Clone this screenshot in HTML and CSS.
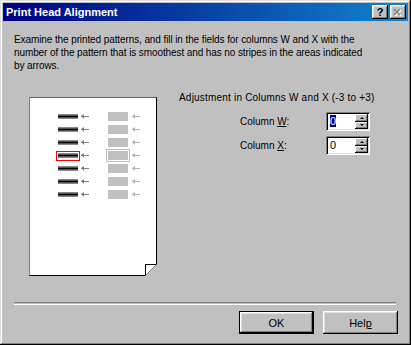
FILE: index.html
```html
<!DOCTYPE html>
<html lang="en">
<head>
    <meta charset="UTF-8">
    <title>Print Head Alignment</title>
    <link rel="stylesheet" href="styles.css">
</head>
<body>
    <div class="window">
        <div class="titlebar">
            <span class="title">Print Head Alignment</span>
            <div class="title-buttons">
                <span class="tbtn help">?</span>
                <span class="tbtn">
                    <svg width="10" height="9" viewBox="0 0 10 9">
                        <path d="M2 2L8 8M8 2L2 8" stroke="#fff" stroke-width="1.6"/>
                        <path d="M1 1L7 7M7 1L1 7" stroke="#808080" stroke-width="1.6"/>
                    </svg>
                </span>
            </div>
        </div>

        <div class="content">
            <p class="intro">Examine the printed patterns, and fill in the fields for columns W and X with the<br>number of the pattern that is smoothest and has no stripes in the areas indicated<br>by arrows.</p>

            <div class="main">
                <div class="paper">
                    <div class="row"><span class="lcell"><span class="bar"></span></span><span class="arrow"></span><span class="rcell"><span class="box"></span></span><span class="arrow light"></span></div>
                    <div class="row"><span class="lcell"><span class="bar"></span></span><span class="arrow"></span><span class="rcell"><span class="box"></span></span><span class="arrow light"></span></div>
                    <div class="row"><span class="lcell"><span class="bar"></span></span><span class="arrow"></span><span class="rcell"><span class="box"></span></span><span class="arrow light"></span></div>
                    <div class="row"><span class="lcell selected"><span class="bar"></span></span><span class="arrow"></span><span class="rcell selected"><span class="box"></span></span><span class="arrow light"></span></div>
                    <div class="row"><span class="lcell"><span class="bar"></span></span><span class="arrow"></span><span class="rcell"><span class="box"></span></span><span class="arrow light"></span></div>
                    <div class="row"><span class="lcell"><span class="bar"></span></span><span class="arrow"></span><span class="rcell"><span class="box"></span></span><span class="arrow light"></span></div>
                    <div class="row"><span class="lcell"><span class="bar"></span></span><span class="arrow"></span><span class="rcell"><span class="box"></span></span><span class="arrow light"></span></div>
                    <svg class="fold" width="12" height="12" viewBox="0 0 12 12">
                        <polygon points="12,0 12,12 0,12" fill="#c0c0c0"/>
                        <polygon points="0.5,0.5 11.5,0.5 0.5,11.5" fill="#fff"/>
                        <path d="M0.5 0V11.5M0 0.5H11.5" stroke="#000"/>
                        <path d="M11.5 0.5L0.5 11.5" stroke="#808080"/>
                    </svg>
                </div>

                <div class="adjust">
                    <div class="adjust-title">Adjustment in Columns W and X (-3 to +3)</div>
                    <div class="field">
                        <label>Column <u>W</u>:</label>
                        <div class="spin">
                            <span class="value"><span class="selected-text">0</span></span>
                            <span class="spin-buttons">
                                <span class="spin-btn"><span class="up"></span></span>
                                <span class="spin-btn"><span class="down"></span></span>
                            </span>
                        </div>
                    </div>
                    <div class="field">
                        <label>Column <u>X</u>:</label>
                        <div class="spin">
                            <span class="value">0</span>
                            <span class="spin-buttons">
                                <span class="spin-btn"><span class="up"></span></span>
                                <span class="spin-btn"><span class="down"></span></span>
                            </span>
                        </div>
                    </div>
                </div>
            </div>

            <div class="separator"></div>

            <div class="buttons">
                <button class="btn default">OK</button>
                <button class="btn">Hel<u>p</u></button>
            </div>
        </div>
    </div>
</body>
</html>
```

FILE: styles.css
```css
body {
    margin: 0;
    padding: 0;
    background-color: #c0c0c0;
    font-family: "Liberation Sans", Arial, sans-serif;
    font-size: 10px;
    color: #000;
}
.window {
    width: 411px;
    height: 345px;
    box-sizing: border-box;
    padding: 3px;
    background-color: #c0c0c0;
    box-shadow: inset -1px -1px #000, inset 1px 1px #dfdfdf, inset -2px -2px #808080, inset 2px 2px #fff;
    display: flex;
    flex-direction: column;
}
.titlebar {
    height: 18px;
    background: linear-gradient(to right, #000080, #1084d0);
    display: flex;
    align-items: center;
    justify-content: space-between;
    padding: 0 2px 0 3px;
}
.title {
    color: #fff;
    font-weight: bold;
    font-size: 11px;
}
.title-buttons {
    display: flex;
    gap: 2px;
}
.tbtn {
    width: 16px;
    height: 14px;
    box-sizing: border-box;
    background-color: #c0c0c0;
    box-shadow: inset -1px -1px #000, inset 1px 1px #fff, inset -2px -2px #808080, inset 2px 2px #dfdfdf;
    display: flex;
    align-items: center;
    justify-content: center;
}
.tbtn.help {
    font-weight: bold;
    font-size: 11px;
    line-height: 14px;
}
.content {
    flex: 1;
    display: flex;
    flex-direction: column;
    padding: 12px 10px 8px 11px;
}
.intro {
    margin: 0;
    line-height: 13px;
    letter-spacing: -0.1px;
}
.main {
    display: flex;
    align-items: flex-start;
    margin-top: 19px;
}
.paper {
    position: relative;
    width: 128px;
    height: 179px;
    box-sizing: border-box;
    margin-top: 6px;
    margin-left: 15px;
    background-color: #fff;
    border-top: 1px solid #606060;
    border-left: 1px solid #808080;
    border-right: 1px solid #000;
    border-bottom: 1px solid #000;
    padding: 12px 0 0 26px;
}
.row {
    display: flex;
    align-items: center;
    height: 13px;
}
.lcell {
    width: 24px;
    height: 10px;
    box-sizing: border-box;
    border: 1px solid transparent;
    display: flex;
    align-items: center;
    justify-content: center;
}
.lcell.selected {
    border-color: #f00;
}
.bar {
    width: 20px;
    height: 5px;
    background: linear-gradient(to bottom, #8a8a8a 0 1px, #555 1px 2px, #000 2px 3px, #555 3px 4px, #8a8a8a 4px);
}
.arrow {
    position: relative;
    width: 8px;
    height: 1px;
    margin-left: 1px;
    background-color: #808080;
}
.arrow::before {
    content: "";
    position: absolute;
    left: 0;
    top: -2px;
    border-right: 3px solid #808080;
    border-top: 2px solid transparent;
    border-bottom: 3px solid transparent;
}
.arrow.light {
    margin-left: 2px;
    background-color: #b4b4b4;
}
.arrow.light::before {
    border-right-color: #b4b4b4;
}
.rcell {
    width: 24px;
    height: 13px;
    box-sizing: border-box;
    margin-left: 17px;
    border: 1px solid transparent;
    display: flex;
    align-items: center;
    justify-content: center;
}
.rcell.selected {
    border-color: #c0c0c0;
}
.box {
    width: 20px;
    height: 9px;
    background-color: #c0c0c0;
}
.fold {
    position: absolute;
    right: -1px;
    bottom: -1px;
}
.adjust {
    margin-left: 22px;
}
.adjust-title {
    line-height: 13px;
    letter-spacing: 0.2px;
}
.field {
    display: flex;
    align-items: center;
    height: 19px;
    margin-top: 8px;
    padding-left: 61px;
}
.field + .field {
    margin-top: 5px;
}
.field label {
    width: 86px;
}
.spin {
    width: 44px;
    height: 19px;
    box-sizing: border-box;
    padding: 2px;
    background-color: #fff;
    box-shadow: inset 1px 1px #808080, inset -1px -1px #fff, inset 2px 2px #000, inset -2px -2px #dfdfdf;
    display: flex;
}
.value {
    flex: 1;
    padding-left: 2px;
    font-size: 11px;
    line-height: 15px;
}
.selected-text {
    background-color: #000080;
    color: #fff;
}
.spin-buttons {
    width: 13px;
    display: flex;
    flex-direction: column;
}
.spin-btn {
    flex: 1;
    background-color: #c0c0c0;
    box-shadow: inset -1px -1px #000, inset 1px 1px #fff, inset -2px -2px #808080;
    display: flex;
    align-items: center;
    justify-content: center;
}
.up {
    border-left: 2px solid transparent;
    border-right: 2px solid transparent;
    border-bottom: 2px solid #000;
}
.down {
    border-left: 2px solid transparent;
    border-right: 2px solid transparent;
    border-top: 2px solid #000;
}
.separator {
    margin-top: auto;
    margin-right: 2px;
    height: 1px;
    border-top: 1px solid #808080;
    border-bottom: 1px solid #fff;
}
.buttons {
    display: flex;
    justify-content: flex-end;
    gap: 9px;
    margin-top: 6px;
}
.btn {
    width: 75px;
    height: 23px;
    font-family: "Liberation Sans", Arial, sans-serif;
    font-size: 11px;
    color: #000;
    background-color: #c0c0c0;
    border: none;
    padding: 0;
    box-shadow: inset -1px -1px #000, inset 1px 1px #fff, inset -2px -2px #808080, inset 2px 2px #dfdfdf;
}
.btn.default {
    box-shadow: inset 0 0 0 1px #000, inset -2px -2px #000, inset 2px 2px #fff, inset -3px -3px #808080, inset 3px 3px #dfdfdf;
}
```
